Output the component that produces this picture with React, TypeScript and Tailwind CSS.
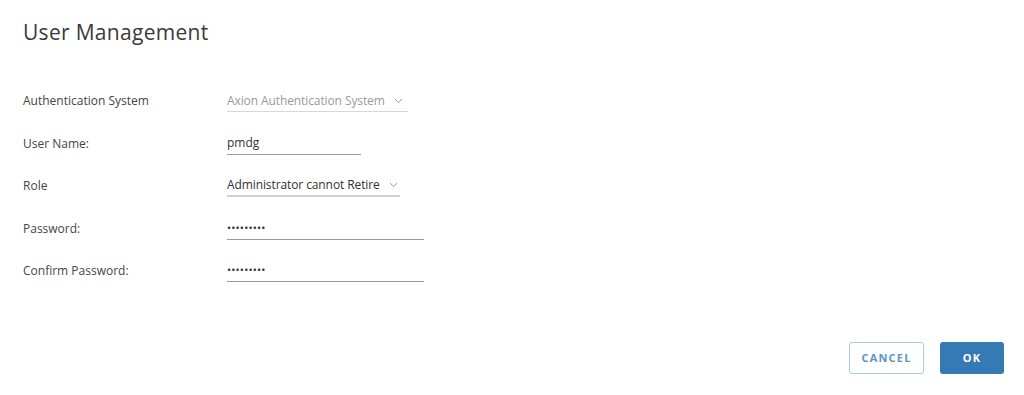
import React from "react";

const Chevron = () => (
  <svg width="9" height="6" viewBox="0 0 9 6" fill="none" className="ml-[9px] shrink-0">
    <path d="M1 1 L4.5 4.5 L8 1" stroke="#9a9a9a" strokeWidth="1" />
  </svg>
);

export default function App() {
  const font = { fontFamily: '"Open Sans", "Liberation Sans", sans-serif' };
  const labelCls = "w-[204px] shrink-0 text-[12px] text-[#454545] whitespace-nowrap";
  return (
    <div className="w-[1024px] h-[395px] bg-white relative overflow-hidden" style={font}>
      <div className="pl-[23px] pt-[18px]">
        <h1 className="text-[21px] leading-[28px] font-normal text-[#3a3a3a] tracking-[0.3px]">User Management</h1>
        <div className="mt-[44px] flex flex-col gap-[20.5px]">
          <div className="flex items-center h-[22px]">
            <div className={labelCls}>Authentication System</div>
            <div className="w-[181px] h-[22px] flex items-center border-b border-[#d7d7d7] text-[12px] tracking-[-0.1px] text-[#9a9a9a] whitespace-nowrap">
              <span>Axion Authentication System</span>
              <Chevron />
            </div>
          </div>
          <div className="flex items-center h-[22px]">
            <div className={labelCls}>User Name:</div>
            <div className="w-[134px] h-[22px] flex items-center border-b border-[#9a9a9a] text-[12px] text-[#313131]">
              pmdg
            </div>
          </div>
          <div className="flex items-center h-[22px]">
            <div className={labelCls}>Role</div>
            <div className="w-[173px] h-[22px] flex items-center border-b-2 border-[#cfcfcf] text-[12px] tracking-[-0.1px] text-[#313131] whitespace-nowrap">
              <span>Administrator cannot Retire</span>
              <Chevron />
            </div>
          </div>
          <div className="flex items-center h-[22px]">
            <div className={labelCls}>Password:</div>
            <div className="w-[197px] h-[22px] flex items-center border-b border-[#9a9a9a] text-[11px] text-[#313131] tracking-[0.15px]">
              •••••••••
            </div>
          </div>
          <div className="flex items-center h-[22px]">
            <div className={labelCls}>Confirm Password:</div>
            <div className="w-[197px] h-[22px] flex items-center border-b border-[#9a9a9a] text-[11px] text-[#313131] tracking-[0.15px]">
              •••••••••
            </div>
          </div>
        </div>
      </div>
      <div className="mt-[60px] pr-[20px] flex justify-end gap-[16px]">
        <button className="w-[75px] h-[32px] rounded-[3px] border border-[#a9cbe8] bg-white text-[11px] font-bold tracking-[1.2px] text-[#5a95c8]">
          CANCEL
        </button>
        <button className="w-[64px] h-[32px] rounded-[3px] bg-[#3579b5] text-[11px] font-bold tracking-[1.2px] text-white">
          OK
        </button>
      </div>
    </div>
  );
}
